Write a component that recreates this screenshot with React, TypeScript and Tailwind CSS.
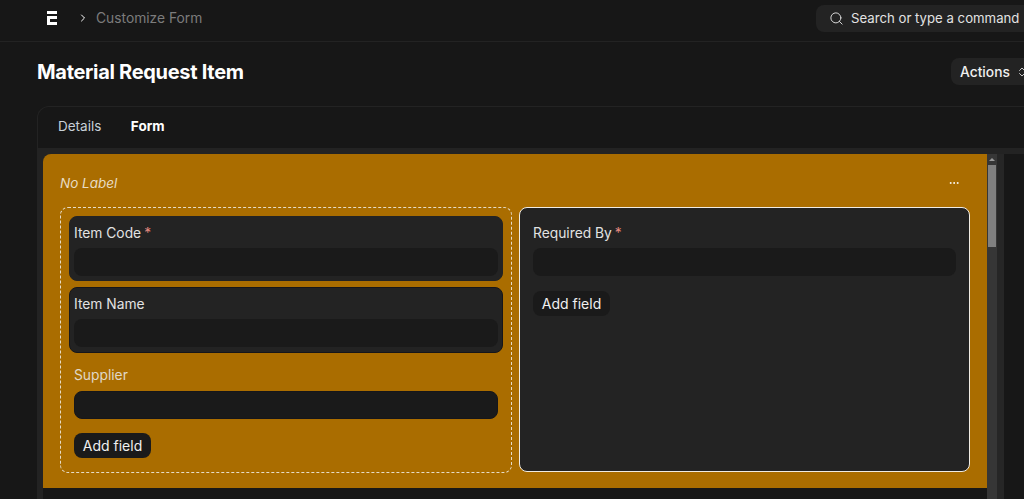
import React from 'react';
import { Search, ChevronRight, ChevronsUpDown, Ellipsis } from 'lucide-react';

const Logo = () => (
  <svg width="10" height="14" viewBox="0 0 10 14" fill="#ffffff" className="block">
    <rect x="0" y="0" width="10" height="3" />
    <rect x="0" y="5" width="10" height="3" />
    <rect x="0" y="5" width="3" height="9" />
    <rect x="0" y="11" width="10" height="3" />
  </svg>
);

const Label = ({ label, required }: { label: string; required?: boolean }) => (
  <div className="h-[20px] text-[13.8px] leading-[20px] text-[#e2e2e2]">
    {label}
    {required && <span className="ml-[3px] text-[#e58a80]">*</span>}
  </div>
);

const FieldCard = ({ label, required, tall }: { label: string; required?: boolean; tall?: boolean }) => (
  <div className={`${tall ? 'h-[66px] border-[#16161a]' : 'h-[65px] border-[#232323]'} rounded-lg bg-[#232323] border px-[4px] pt-[6px]`}>
    <Label label={label} required={required} />
    <div className="mt-[5px] h-[28px] rounded-lg bg-[#1a1a1a]" />
  </div>
);

const AddField = () => (
  <button className="block h-[25px] w-[77px] rounded-lg bg-[#1a1a1a] text-[14px] leading-[25px] text-[#f0f0f0]">
    Add field
  </button>
);

export default function App() {
  return (
    <div className="w-[1024px] h-[499px] overflow-hidden bg-[#171717] font-['Inter',sans-serif]">
      {/* Navbar */}
      <div className="h-[42px] border-b border-[#232323] flex items-center whitespace-nowrap">
        <div className="ml-[47px] mb-[5px] shrink-0">
          <Logo />
        </div>
        <ChevronRight size={12} strokeWidth={2} className="ml-[20px] mb-[6px] shrink-0 text-white" />
        <span className="ml-[7px] mb-[5px] w-[105px] shrink-0 text-[13.8px] text-[#7c7c7c]">Customize Form</span>
        <div className="ml-[615px] mb-[4px] h-[27px] w-[300px] shrink-0 rounded-lg bg-[#232323] flex items-center pl-[13px] text-[13.2px] text-[#e2e2e2]">
          <Search size={15} strokeWidth={1.5} className="shrink-0 text-[#e2e2e2]" />
          <span className="ml-[7px]">Search or type a command</span>
        </div>
      </div>

      {/* Page head */}
      <div className="h-[64px] flex items-center pl-[37px]">
        <h1 className="text-[20px] font-bold tracking-[-0.3px] text-white mb-[4px]">Material Request Item</h1>
        <button className="ml-auto mr-[-40px] mb-[5px] pt-[1px] h-[27px] w-[113px] shrink-0 rounded-lg bg-[#232323] flex items-center pl-[9px] text-[13.8px] font-medium text-[#f0f0f0]">
          Actions
          <ChevronsUpDown size={12} className="ml-[6px] text-[#c8c8c8]" />
        </button>
      </div>

      {/* Main card */}
      <div className="ml-[37px] w-[1020px] rounded-t-xl border border-b-0 border-[#232323] bg-[#171717]">
        <div className="h-[41px] flex items-center pl-[20px] gap-[29.5px] text-[13.5px]">
          <span className="mb-[2px] text-[#c8d0d8]">Details</span>
          <span className="mb-[2px] font-bold text-white">Form</span>
        </div>
        <div className="flex bg-[#232323] pt-[6px] h-[400px]">
          <div className="ml-[5px] w-[944px] shrink-0 flex flex-col">
            <div className="h-[334px] rounded-tl-lg bg-[#aa6d00] px-[17px] pt-[20px]">
              <div className="flex items-center justify-between h-[18px]">
                <span className="text-[13.5px] italic text-[#e8dcc4]">No Label</span>
                <Ellipsis size={12} className="mr-[10px] text-white" />
              </div>
              <div className="mt-[15px] flex gap-[7px]">
                {/* Left column */}
                <div className="w-[452px] h-[266px] rounded-lg border border-dashed border-[#e6dcc8] px-[8px] pt-[8px]">
                  <div className="flex flex-col gap-[6px]">
                    <FieldCard label="Item Code" required />
                    <FieldCard label="Item Name" tall />
                  </div>
                  <div className="mt-[12px] px-[5px]">
                    <div className="text-[13.8px] leading-[20px] text-[#e0d8c8]">Supplier</div>
                    <div className="mt-[6px] h-[28px] rounded-lg bg-[#1a1a1a] border border-[#16161a]" />
                    <div className="mt-[14px]">
                      <AddField />
                    </div>
                  </div>
                </div>
                {/* Right column */}
                <div className="w-[451px] h-[265px] rounded-lg border border-[#f0ece4] bg-[#232323] px-[13px] pt-[15px]">
                  <Label label="Required By" required />
                  <div className="mt-[5px] h-[28px] rounded-lg bg-[#1a1a1a]" />
                  <div className="mt-[15px]">
                    <AddField />
                  </div>
                </div>
              </div>
            </div>
            <div className="flex-1 bg-[#171717]" />
          </div>

          {/* Scrollbar */}
          <div className="w-[10px] shrink-0 bg-[#363636] flex flex-col items-center">
            <div className="h-[11px] w-full flex items-center justify-center">
              <div className="w-0 h-0 border-x-[3px] border-x-transparent border-b-[3px] border-b-[#9a9a9a]" />
            </div>
            <div className="h-[82px] w-[8px] bg-[#808080]" />
          </div>
          <div className="w-[7px] shrink-0 bg-[#262626]" />
          <div className="flex-1 bg-[#171717]" />
        </div>
      </div>
    </div>
  );
}
